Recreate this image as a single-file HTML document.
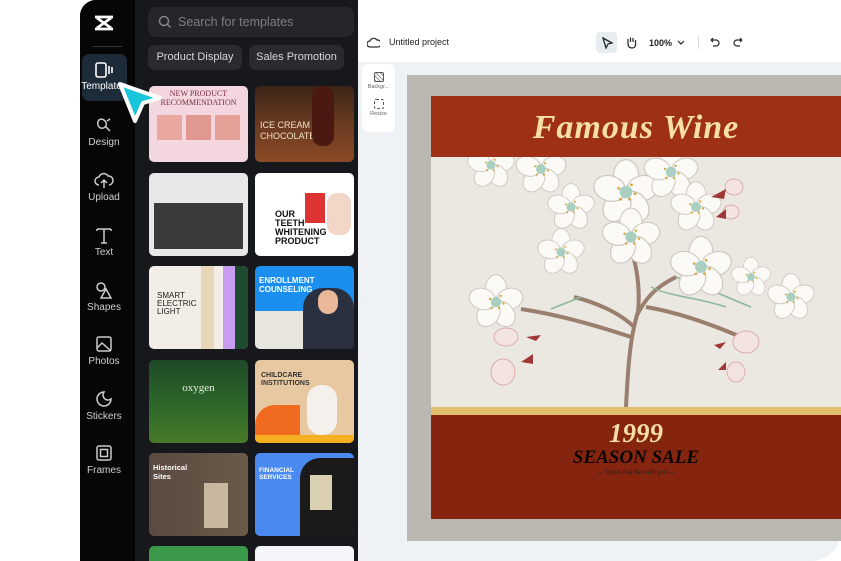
<!DOCTYPE html>
<html><head><meta charset="utf-8"><style>
*{margin:0;padding:0;box-sizing:border-box}
body{width:841px;height:561px;overflow:hidden;background:#fff;font-family:"Liberation Sans",sans-serif;position:relative}
.dark{position:absolute;left:80px;top:0;width:280px;height:561px;background:#17181b;border-top-left-radius:16px;overflow:hidden}
.side{position:absolute;left:0;top:0;width:55px;height:561px;background:#060606}
.nav{position:absolute;left:0;width:48px;text-align:center;color:#cfd0d2;font-size:10px}
.nav svg{display:block;margin:0 auto 3px}
.search{position:absolute;left:68px;top:7px;width:206px;height:30px;background:#25262a;border-radius:8px;color:#7d7f84;font-size:12.5px;line-height:30px;padding-left:30px}
.chip{position:absolute;top:45px;height:25px;background:#2a2b2f;border-radius:7px;color:#d6d7d9;font-size:11px;line-height:25px;text-align:center}
.th{position:absolute;border-radius:5px;overflow:hidden}
.right{position:absolute;left:358px;top:0;width:483px;height:561px;background:#eef2f5;border-bottom-right-radius:30px}
.top{position:absolute;left:0;top:0;width:483px;height:62px;background:#fff}
</style></head><body>
<div class="dark">
 <div class="side">
  <svg style="position:absolute;left:13px;top:14px" width="22" height="18" viewBox="0 0 22 18"><path d="M2 3h18M2 15h18M4 4l14 10M18 4L4 14" stroke="#fff" stroke-width="2.8" fill="none"/></svg>
  <div style="position:absolute;left:12px;top:46px;width:30px;height:1px;background:#333"></div>
  <div style="position:absolute;left:2px;top:54px;width:45px;height:47px;background:#1d2a38;border-radius:7px"></div>
  <div class="nav" style="top:62px;color:#fff"><svg width="18" height="16"><rect x="1" y="1" width="10" height="14" rx="2" stroke="#fff" stroke-width="1.6" fill="none"/><path d="M14 4v8M17 5v6" stroke="#fff" stroke-width="1.6"/></svg>Templates</div>
  <div class="nav" style="top:116px"><svg width="18" height="18"><path d="M4 4c4-3 10 3 6 7s-10-2-6-7zM10 10l5 5M12 5l3-2" stroke="#ccc" stroke-width="1.5" fill="none"/></svg>Design</div>
  <div class="nav" style="top:171px"><svg width="20" height="18"><path d="M5 14a4 4 0 010-8 5 5 0 019-1 4 4 0 011 9M10 9v8M7 12l3-3 3 3" stroke="#ccc" stroke-width="1.5" fill="none"/></svg>Upload</div>
  <div class="nav" style="top:226px"><svg width="18" height="18"><path d="M2 3h14M9 3v14M2 3v2M16 3v2M6 17h6" stroke="#ccc" stroke-width="1.5" fill="none"/></svg>Text</div>
  <div class="nav" style="top:281px"><svg width="18" height="18"><circle cx="6" cy="6" r="4" stroke="#ccc" stroke-width="1.5" fill="none"/><path d="M11 8l5 9H6z" stroke="#ccc" stroke-width="1.5" fill="none"/></svg>Shapes</div>
  <div class="nav" style="top:335px"><svg width="18" height="18"><rect x="2" y="2" width="14" height="14" rx="2" stroke="#ccc" stroke-width="1.5" fill="none"/><path d="M2 13l5-5 9 8" stroke="#ccc" stroke-width="1.5" fill="none"/></svg>Photos</div>
  <div class="nav" style="top:390px"><svg width="18" height="18"><path d="M9 2a7 7 0 107 7 5 5 0 01-7-7z" stroke="#ccc" stroke-width="1.5" fill="none"/></svg>Stickers</div>
  <div class="nav" style="top:444px"><svg width="18" height="18"><rect x="2" y="2" width="14" height="14" rx="2" stroke="#ccc" stroke-width="1.5" fill="none"/><rect x="5.5" y="5.5" width="7" height="7" stroke="#ccc" stroke-width="1.5" fill="none"/></svg>Frames</div>
 </div>
 <div class="search"><svg style="position:absolute;left:10px;top:8px" width="14" height="14"><circle cx="6" cy="6" r="4.5" stroke="#888" stroke-width="1.4" fill="none"/><path d="M9.5 9.5l3 3" stroke="#888" stroke-width="1.4"/></svg>Search for templates</div>
 <div class="chip" style="left:68px;width:94px">Product Display</div>
 <div class="chip" style="left:169px;width:95px">Sales Promotion</div>
 <div class="th" style="left:69px;top:86px;width:99px;height:76px;background:#f4d6de;color:#7a3040;font-size:8px;text-align:center;font-family:'Liberation Serif',serif;padding-top:3px">NEW PRODUCT<br>RECOMMENDATION<div style="display:flex;gap:4px;justify-content:center;margin-top:8px"><div style="width:25px;height:25px;background:#e8a8a0"></div><div style="width:25px;height:25px;background:#e09890"></div><div style="width:25px;height:25px;background:#e5a098"></div></div></div>
 <div class="th" style="left:175px;top:86px;width:99px;height:76px;background:linear-gradient(#3a2418,#6a3a20 50%,#8a4a25);color:#f0e0c8;font-size:9px;padding:34px 0 0 5px;line-height:11px">ICE CREAM<br>CHOCOLATE<div style="position:absolute;left:57px;top:0;width:22px;height:60px;background:#4a1a12;border-radius:10px"></div></div>
 <div class="th" style="left:69px;top:173px;width:99px;height:83px;background:#e8e8e8"><div style="position:absolute;left:5px;top:30px;width:89px;height:46px;background:#3a3a3a"></div></div>
 <div class="th" style="left:175px;top:173px;width:99px;height:83px;background:#fff;color:#111;font-size:9px;font-weight:bold;line-height:9px;padding:37px 0 0 20px">OUR<br>TEETH<br>WHITENING<br>PRODUCT<div style="position:absolute;left:50px;top:20px;width:20px;height:30px;background:#d33"></div><div style="position:absolute;left:72px;top:20px;width:24px;height:42px;background:#f2d6c8;border-radius:10px"></div></div>
 <div class="th" style="left:69px;top:266px;width:99px;height:83px;background:#f2ede6"><div style="position:absolute;left:52px;top:0;width:13px;height:83px;background:#e8d6b8"></div><div style="position:absolute;left:74px;top:0;width:12px;height:83px;background:#c89cf0"></div><div style="position:absolute;left:86px;top:0;width:13px;height:83px;background:#1e4a30"></div><div style="position:absolute;left:8px;top:26px;font-size:8px;color:#222;line-height:8px">SMART<br>ELECTRIC<br>LIGHT</div></div>
 <div class="th" style="left:175px;top:266px;width:99px;height:83px;background:#1a8ff0"><div style="position:absolute;left:4px;top:10px;color:#fff;font-size:8px;font-weight:bold;line-height:9px">ENROLLMENT<br>COUNSELING</div><div style="position:absolute;left:0;top:45px;width:50px;height:38px;background:#e8e4de"></div><div style="position:absolute;left:48px;top:22px;width:51px;height:61px;background:#2a3040;border-radius:20px 20px 0 0"></div><div style="position:absolute;left:63px;top:24px;width:20px;height:24px;background:#e8b898;border-radius:10px"></div></div>
 <div class="th" style="left:69px;top:360px;width:99px;height:83px;background:linear-gradient(#1e4a28,#2f6a2a 60%,#4a7a2a);color:#e8f0e0;font-size:11px;font-family:'Liberation Serif',serif;text-align:center;padding-top:22px">oxygen</div>
 <div class="th" style="left:175px;top:360px;width:99px;height:83px;background:#e8c8a0"><div style="position:absolute;left:6px;top:12px;font-size:7px;font-weight:bold;color:#333;line-height:8px">CHILDCARE<br>INSTITUTIONS</div><div style="position:absolute;left:0;top:45px;width:45px;height:30px;background:#f06a20;border-radius:20px 0 0 0"></div><div style="position:absolute;left:52px;top:25px;width:30px;height:50px;background:#f4f0ec;border-radius:14px"></div><div style="position:absolute;left:0;top:75px;width:99px;height:8px;background:#f4b020"></div></div>
 <div class="th" style="left:69px;top:453px;width:99px;height:83px;background:linear-gradient(90deg,#5a4a40,#6a5a48)"><div style="position:absolute;left:4px;top:10px;color:#fff;font-size:7.5px;font-weight:bold;line-height:9px">Historical<br>Sites</div><div style="position:absolute;left:55px;top:30px;width:24px;height:45px;background:#c8b8a0"></div></div>
 <div class="th" style="left:175px;top:453px;width:99px;height:83px;background:#4a8af0"><div style="position:absolute;left:4px;top:14px;color:#fff;font-size:6.5px;font-weight:bold;line-height:7px">FINANCIAL<br>SERVICES</div><div style="position:absolute;left:45px;top:5px;width:54px;height:78px;background:#1a1a1a;border-radius:20px 0 0 0"></div><div style="position:absolute;left:55px;top:22px;width:22px;height:35px;background:#d8d0b0"></div></div>
 <div class="th" style="left:69px;top:546px;width:99px;height:20px;background:#3a9a4a"></div>
 <div class="th" style="left:175px;top:546px;width:99px;height:20px;background:#f4f6fa"></div>
</div>
<svg style="position:absolute;left:112px;top:80px" width="54" height="48" viewBox="0 0 54 48"><path d="M8 4l40 14-17 5-8 18z" fill="#19c5da" stroke="#fff" stroke-width="4" stroke-linejoin="round"/></svg>
<div class="right">
 <div class="top">
  <svg style="position:absolute;left:9px;top:37px" width="13" height="11"><path d="M3 10a3 3 0 010-6 4 4 0 017-1 3 3 0 011 7z" stroke="#333" stroke-width="1.3" fill="none"/></svg>
  <div style="position:absolute;left:31px;top:37px;font-size:9px;color:#222">Untitled project</div>
  <div style="position:absolute;left:238px;top:32px;width:21px;height:21px;background:#e7ecef;border-radius:4px"></div>
  <svg style="position:absolute;left:243px;top:37px" width="12" height="12"><path d="M2 1l9 5-4 1-2 4z" stroke="#222" stroke-width="1.3" fill="none"/></svg>
  <svg style="position:absolute;left:267px;top:36px" width="12" height="13"><path d="M3 7V3M5.5 6V1.5M8 6V2M10.5 7V4M3 7c0 4 2 5 4 5s4-1 3.5-5" stroke="#222" stroke-width="1.2" fill="none"/></svg>
  <div style="position:absolute;left:291px;top:38px;font-size:9px;color:#222;font-weight:bold">100%</div>
  <svg style="position:absolute;left:319px;top:40px" width="8" height="6"><path d="M1 1l3 3 3-3" stroke="#222" stroke-width="1.2" fill="none"/></svg>
  <div style="position:absolute;left:340px;top:36px;width:1px;height:13px;background:#ddd"></div>
  <svg style="position:absolute;left:351px;top:37px" width="11" height="11"><path d="M2 3h5a3 3 0 010 6H4M2 3l2-2M2 3l2 2" stroke="#222" stroke-width="1.2" fill="none"/></svg>
  <svg style="position:absolute;left:375px;top:37px" width="11" height="11"><path d="M9 3H4a3 3 0 000 6h3M9 3L7 1M9 3L7 5" stroke="#222" stroke-width="1.2" fill="none"/></svg>
 </div>
 <div style="position:absolute;left:4px;top:64px;width:33px;height:68px;background:#fff;border-radius:6px;text-align:center;font-size:5.5px;color:#666">
  <div style="margin:8px auto 2px;width:10px;height:10px;border:1.2px solid #555;border-radius:2px;background:repeating-linear-gradient(45deg,#999 0 1px,#fff 1px 3px)"></div>Backgr...
  <div style="margin:9px auto 2px;width:10px;height:10px;border:1.2px dashed #555;border-radius:2px"></div>Resize
 </div>
 <div style="position:absolute;left:49px;top:75px;width:434px;height:466px;background:#bab8b1">
  <div style="position:absolute;left:24px;top:21px;width:410px;height:423px;background:#ebe7e1;overflow:hidden">
   <div style="position:absolute;left:0;top:0;width:410px;height:61px;background:#9e3015;color:#f7dfa8;font-family:'Liberation Serif',serif;font-style:italic;font-weight:bold;font-size:34px;text-align:center;line-height:63px;letter-spacing:1px">Famous Wine</div>
   <svg style="position:absolute;left:0;top:61px" width="410" height="250" viewBox="0 0 410 250">
    <defs>
     <g id="fl"><g fill="#fbfaf7" stroke="#cfc8c0" stroke-width="0.7"><ellipse cx="0" cy="-9" rx="7" ry="9"/><ellipse cx="9" cy="-2" rx="7" ry="9" transform="rotate(72 9 -2)"/><ellipse cx="5" cy="8" rx="7" ry="9" transform="rotate(144 5 8)"/><ellipse cx="-5" cy="8" rx="7" ry="9" transform="rotate(216 -5 8)"/><ellipse cx="-9" cy="-2" rx="7" ry="9" transform="rotate(288 -9 -2)"/></g><circle r="3.5" fill="#a8cfc0"/><g fill="#d8a840"><circle cx="3" cy="-4" r="0.8"/><circle cx="-4" cy="-2" r="0.8"/><circle cx="2" cy="4" r="0.8"/><circle cx="-3" cy="4" r="0.8"/><circle cx="5" cy="1" r="0.8"/></g></g>
    </defs>
    <path d="M195 250c2-40 4-70 12-95M207 155c2-20 0-40-6-60M205 160c10-20 20-30 40-40M203 170c-15-15-40-25-60-30M200 180c-30-10-70-22-110-28M215 150c30 5 60 15 95 30" stroke="#9a7e6e" stroke-width="4" fill="none"/>
    <path d="M150 140l-30 12M220 130c20 10 45 10 75 20M245 120c30 10 50 20 75 30" stroke="#8cb898" stroke-width="1.5" fill="none"/>
    <use href="#fl" transform="translate(60,8) scale(1.3)"/><use href="#fl" transform="translate(110,12) scale(1.4)"/><use href="#fl" transform="translate(140,50) scale(1.3)"/><use href="#fl" transform="translate(195,35) scale(1.8)"/><use href="#fl" transform="translate(240,15) scale(1.5)"/><use href="#fl" transform="translate(265,50) scale(1.4)"/><use href="#fl" transform="translate(200,80) scale(1.6)"/><use href="#fl" transform="translate(130,95) scale(1.3)"/><use href="#fl" transform="translate(270,110) scale(1.7)"/><use href="#fl" transform="translate(65,145) scale(1.5)"/><use href="#fl" transform="translate(360,140) scale(1.3)"/><use href="#fl" transform="translate(320,120) scale(1.1)"/>
    <g fill="#f3e4e2" stroke="#d8a0a0" stroke-width="0.8"><ellipse cx="75" cy="180" rx="12" ry="9"/><ellipse cx="72" cy="215" rx="12" ry="13"/><ellipse cx="315" cy="185" rx="13" ry="11"/><ellipse cx="305" cy="215" rx="9" ry="10"/><ellipse cx="303" cy="30" rx="9" ry="8"/><ellipse cx="300" cy="55" rx="8" ry="7"/></g>
    <g fill="#a03838"><path d="M280 40l15-8-2 10zM285 60l10-8v10zM95 180l15-2-5 6zM90 205l12-8v10zM295 185l-12 3 6 4zM295 205l-8 8h8z"/></g>
   </svg>
   <div style="position:absolute;left:0;top:311px;width:410px;height:8px;background:#e3c06e"></div>
   <div style="position:absolute;left:0;top:319px;width:410px;height:104px;background:#85250f;text-align:center">
    <div style="font-family:'Liberation Serif',serif;font-style:italic;font-weight:bold;color:#f7dfa8;font-size:27px;line-height:28px;margin-top:4px">1999</div>
    <div style="font-family:'Liberation Serif',serif;font-style:italic;font-weight:bold;color:#0a0505;font-size:19px;line-height:20px;margin-top:1px">SEASON SALE</div>
    <div style="font-size:6px;color:#222;margin-top:2px">— Styles that flex with you —</div>
   </div>
  </div>
 </div>
</div>
</body></html>
